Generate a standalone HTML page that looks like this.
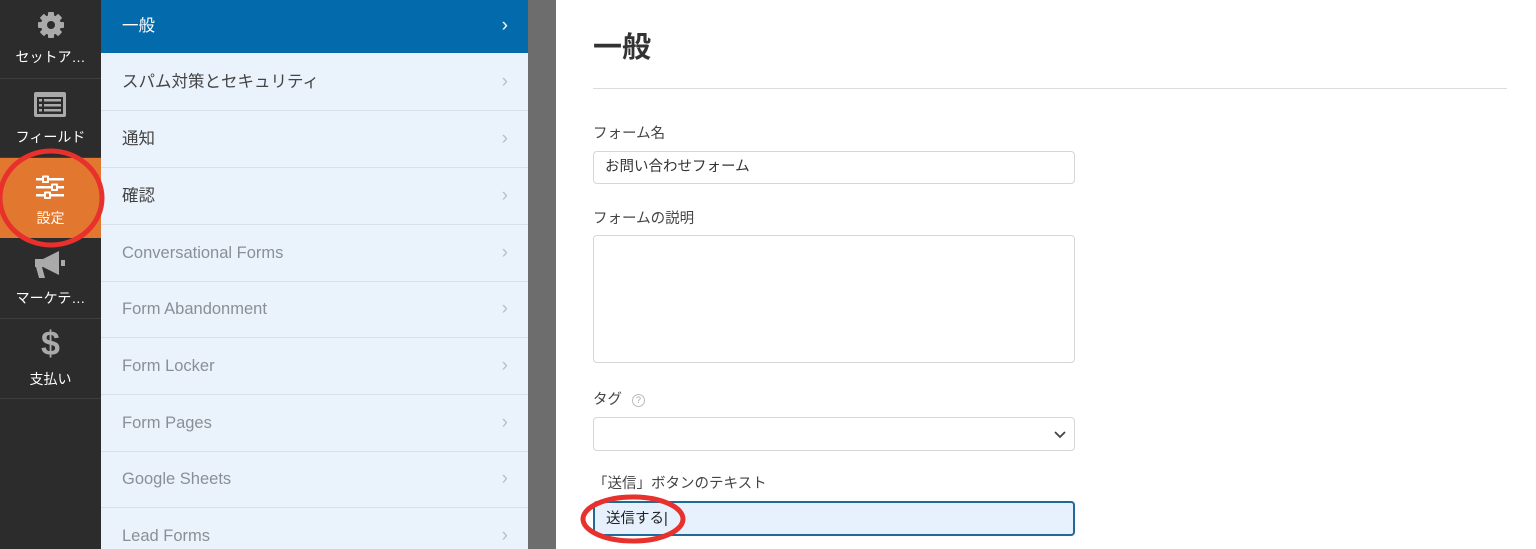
<!DOCTYPE html>
<html><head><meta charset="utf-8"><style>
*{box-sizing:border-box;margin:0;padding:0}
html,body{width:1536px;height:549px;overflow:hidden}
body{background:#fff;font-family:"Liberation Sans","Noto Sans CJK JP",sans-serif;position:relative}
.sb{position:absolute;left:0;top:0;width:101px;height:549px;background:#2c2c2c}
.si{position:absolute;left:0;width:101px;height:80px;border-bottom:1px solid #3d3d3d;color:#fff;font-size:14px;text-align:center}
.si .lb{position:absolute;left:0;right:0;top:47px}
.si svg{position:absolute;left:34px;top:10px}
.menu{position:absolute;left:101px;top:0;width:427px;height:549px;background:#eaf3fc;overflow:hidden}
.mi{position:absolute;left:0;width:427px;height:57px;border-bottom:1px solid #d8dfe6;font-size:16.5px;color:#444;padding-left:21px;line-height:56px}
.mi.g{color:#8a8f95}
.mi.a{background:#036aab;color:#fff;border-bottom:none;height:53px;line-height:52px}
.mi .ch{position:absolute;right:20px;top:0;color:#b7bfc7;font-size:19px}
.mi.a .ch{color:#fff}
.gap{position:absolute;left:528px;top:0;width:28px;height:549px;background:#6d6d6d}
.ct{position:absolute;left:556px;top:0;right:0;height:549px;background:#fff}
h1{position:absolute;left:593px;top:24px;font-size:29px;color:#333;font-weight:bold}
.hr{position:absolute;left:593px;top:88px;width:914px;height:1px;background:#dcdcdc}
.l{position:absolute;left:593px;font-size:14.5px;color:#444}
.in{position:absolute;left:593px;width:482px;border:1px solid #d6d6d6;border-radius:4px;background:#fff;font-size:14.5px;color:#333;padding-left:11px}
</style></head><body>
<div class="sb">
 <div class="si" style="top:0;height:79px"><svg width="32" height="32" viewBox="0 0 32 32" style="left:35px;top:9px"><g fill="#aaa"><circle cx="16" cy="16" r="10"/><g><rect x="13" y="3" width="6" height="26" rx="1"/><rect x="3" y="13" width="26" height="6" rx="1"/><rect x="13" y="3" width="6" height="26" rx="1" transform="rotate(45 16 16)"/><rect x="13" y="3" width="6" height="26" rx="1" transform="rotate(-45 16 16)"/></g></g><circle cx="16" cy="16" r="4" fill="#2c2c2c"/></svg><div class="lb" style="top:47px">セットア…</div></div>
 <div class="si" style="top:79px;height:79px"><svg width="32" height="28" viewBox="0 0 32 28" style="left:34px;top:13px"><rect x="0" y="0" width="32" height="25" rx="2" fill="#aaa"/><rect x="3" y="5" width="26" height="17" fill="#2c2c2c"/><g fill="#aaa"><rect x="5" y="7" width="3" height="2.5"/><rect x="10" y="7" width="17" height="2.5"/><rect x="5" y="12" width="3" height="2.5"/><rect x="10" y="12" width="17" height="2.5"/><rect x="5" y="17" width="3" height="2.5"/><rect x="10" y="17" width="17" height="2.5"/></g></svg><div class="lb" style="top:48px">フィールド</div></div>
 <div class="si" style="top:158px;height:80px;background:#e27730;border:none"><svg width="30" height="28" viewBox="0 0 30 28" style="left:36px;top:15px"><g fill="#fff"><rect x="0" y="5" width="28" height="2.5"/><rect x="6" y="2.5" width="7" height="7.5" rx="1"/><rect x="0" y="13" width="28" height="2.5"/><rect x="15" y="10.5" width="7" height="7.5" rx="1"/><rect x="0" y="21" width="28" height="2.5"/><rect x="8" y="18.5" width="7" height="7.5" rx="1"/></g><g fill="#e27730"><rect x="8" y="4.5" width="3" height="3.5"/><rect x="17" y="12.5" width="3" height="3.5"/><rect x="10" y="20.5" width="3" height="3.5"/></g></svg><div class="lb" style="top:50px">設定</div></div>
 <div class="si" style="top:238px;height:81px"><svg width="34" height="30" viewBox="0 0 34 30" style="left:33px;top:12px"><path fill="#aaa" d="M2 9h8l16-8v24l-16-8H9l3 11h-6l-3-11H2z"/><rect x="28" y="10" width="4" height="6" fill="#aaa"/></svg><div class="lb" style="top:50px">マーケテ…</div></div>
 <div class="si" style="top:319px;height:80px"><div style="position:absolute;left:0;right:0;top:6px;font-size:34px;font-weight:bold;color:#aaa">$</div><div class="lb" style="top:50px">支払い</div></div>
</div>
<div class="menu">
 <div class="mi a" style="top:0">一般<span class="ch">›</span></div>
 <div class="mi" style="top:54px">スパム対策とセキュリティ<span class="ch">›</span></div>
 <div class="mi" style="top:111px">通知<span class="ch">›</span></div>
 <div class="mi" style="top:168px">確認<span class="ch">›</span></div>
 <div class="mi g" style="top:225px">Conversational Forms<span class="ch">›</span></div>
 <div class="mi g" style="top:281px">Form Abandonment<span class="ch">›</span></div>
 <div class="mi g" style="top:338px">Form Locker<span class="ch">›</span></div>
 <div class="mi g" style="top:395px">Form Pages<span class="ch">›</span></div>
 <div class="mi g" style="top:451px">Google Sheets<span class="ch">›</span></div>
 <div class="mi g" style="top:508px">Lead Forms<span class="ch">›</span></div>
</div>
<div class="gap"></div>
<div class="ct"></div>
<h1>一般</h1>
<div class="hr"></div>
<div class="l" style="top:122px">フォーム名</div>
<div class="in" style="top:151px;height:33px;line-height:31px">お問い合わせフォーム</div>
<div class="l" style="top:207px">フォームの説明</div>
<div class="in" style="top:235px;height:128px"></div>
<div class="l" style="top:388px">タグ <span style="display:inline-block;width:13px;height:13px;border:1px solid #bbb;border-radius:50%;font-size:9px;color:#aaa;text-align:center;line-height:11px;margin-left:6px;vertical-align:1px">?</span></div>
<div class="in" style="top:417px;height:34px"><svg width="12" height="8" viewBox="0 0 12 8" style="position:absolute;right:8px;top:13px"><path d="M1 1l5 5 5-5" stroke="#444" stroke-width="1.8" fill="none"/></svg></div>
<div class="l" style="top:472px">「送信」ボタンのテキスト</div>
<div class="in" style="top:501px;height:35px;line-height:33px;background:#e6f1fd;border:2px solid #1e6b9a;color:#222">送信する|</div>
<svg width="1536" height="549" style="position:absolute;left:0;top:0" viewBox="0 0 1536 549"><ellipse cx="51" cy="198" rx="51" ry="47" fill="none" stroke="#e8302c" stroke-width="5"/><ellipse cx="633" cy="519" rx="50" ry="22" fill="none" stroke="#e8302c" stroke-width="5"/></svg>
</body></html>
